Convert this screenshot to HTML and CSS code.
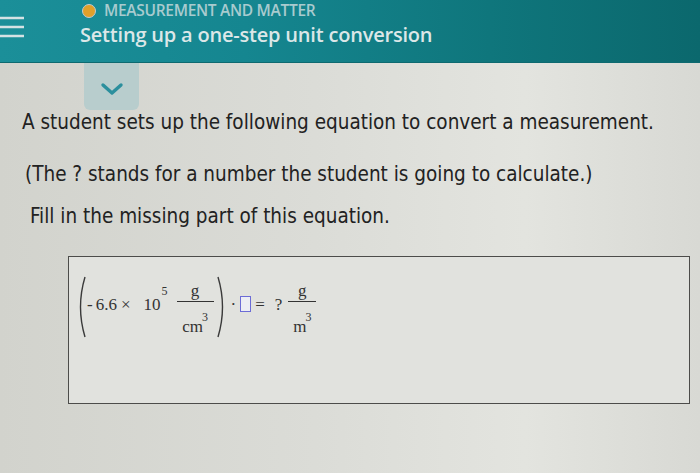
FILE: index.html
```html
<!DOCTYPE html>
<html>
<head>
<meta charset="utf-8">
<link rel="stylesheet" href="styles.css">
</head>
<body>
<header class="topbar">
  <div class="menu">
    <svg width="26" height="26" viewBox="0 0 26 26"><path d="M0 3H24M0 12H24M0 21H24" stroke="#d4e2e4" stroke-width="2.4" fill="none"/></svg>
  </div>
  <div class="titles">
    <div class="topic"><span class="dot"></span>MEASUREMENT AND MATTER</div>
    <div class="title">Setting up a one-step unit conversion</div>
  </div>
</header>
<main class="content">
  <div class="tab-row">
    <div class="tab">
      <svg width="24" height="14" viewBox="0 0 24 14"><path d="M3 3L12 11L21 3" stroke="#2b8f9d" stroke-width="3.4" fill="none" stroke-linecap="round" stroke-linejoin="round"/></svg>
    </div>
  </div>
  <p class="q q1">A student sets up the following equation to convert a measurement.</p>
  <p class="q q2">(The ? stands for a number the student is going to calculate.)</p>
  <p class="q q3">Fill in the missing part of this equation.</p>
  <div class="answer">
    <div class="eq">
      <svg class="paren" width="12" height="62" viewBox="0 0 12 62"><path d="M10 1Q1 31 10 61" stroke="#3a3a3a" stroke-width="1.4" fill="none"/></svg>
      <span class="num"><span class="minus">-</span><span class="d1">6.6</span><span class="times">&times;</span><span class="d2">10</span><span class="sp5">5</span></span>
      <span class="frac f1"><span class="top">g</span><span class="bot"><span class="u">cm</span><span class="sp3">3</span></span></span>
      <svg class="paren close" width="12" height="62" viewBox="0 0 12 62"><path d="M2 1Q11 31 2 61" stroke="#3a3a3a" stroke-width="1.4" fill="none"/></svg>
      <span class="cdot">&middot;</span>
      <span class="slot"></span>
      <span class="eqs">=</span>
      <span class="qm">?</span>
      <span class="frac f2"><span class="top">g</span><span class="bot"><span class="u">m</span><span class="sp3">3</span></span></span>
    </div>
  </div>
</main>
</body>
</html>
```
FILE: styles.css
```css
html, body { margin: 0; padding: 0; }
body {
  width: 700px; height: 473px; overflow: hidden;
  background: linear-gradient(90deg, #d2d3cd 0%, #dbdcd7 45%, #e3e4df 75%, #d8d9d4 100%);
  font-family: "DejaVu Sans", Verdana, sans-serif;
}
.topbar {
  height: 62px;
  background: linear-gradient(90deg, #1b8f99 0%, #158690 35%, #0f767c 70%, #0b686d 100%);
  border-bottom: 1px solid #0e6a70;
  display: flex;
  align-items: flex-start;
}
.menu { width: 26px; padding-top: 15px; }
.titles { margin-left: 54px; }
.topic {
  display: flex; align-items: center;
  font-family: "Open Sans", sans-serif;
  font-weight: 600; font-size: 15.5px;
  color: #a9cbcf;
  height: 19px;
  line-height: 19px;
  padding-top: 1px;
  letter-spacing: -0.3px;
}
.dot {
  width: 12px; height: 12px; border-radius: 50%;
  background: #e1a02a;
  border: 1px solid #c4cacc;
  margin-left: 2px; margin-right: 8px;
}
.title {
  font-family: "Open Sans", sans-serif;
  font-weight: 600; font-size: 20px;
  color: #dce7e8;
  margin-top: 1px;
  letter-spacing: -0.2px;
}
.content { padding-top: 0; }
.tab-row { padding-left: 84px; }
.tab {
  width: 55px; height: 47px;
  background: #b8cdcd;
  border-radius: 0 0 6px 6px;
  display: flex; align-items: center; justify-content: center;
  padding-top: 4px;
  box-sizing: border-box;
}
.q {
  margin: 0;
  font-family: "DejaVu Sans Condensed", "DejaVu Sans", sans-serif;
  font-size: 20.5px;
  line-height: 24px;
  color: #222;
}
.q1 { padding-left: 22px; margin-top: 0; }
.q2 { padding-left: 25px; margin-top: 28px; }
.q3 { padding-left: 30px; margin-top: 18px; }
.answer {
  margin: 28px 10px 0 68px;
  height: 146px;
  border: 1.5px solid #4c4c4a;
  background: #e1e2de;
}
.eq {
  display: flex; align-items: flex-start;
  font-family: "Liberation Serif", serif;
  font-size: 17px;
  line-height: 20px;
  color: #333;
  padding: 17px 0 0 6px;
}
.paren { margin-top: 2px; flex: none; }
.num { display: flex; align-items: flex-start; margin-top: 21px; white-space: nowrap; flex: none; }
.d1 { margin-left: 3px; }
.times { margin-left: 4px; }
.d2 { margin-left: 13px; }
.sp5, .sp3 { font-size: 12px; line-height: 12px; }
.sp5 { margin: -10px 0 0 1px; }
.frac { display: flex; flex-direction: column; align-items: center; margin-top: 8px; flex: none; }
.f1 { width: 37px; margin-left: 9px; }
.f2 { width: 28px; margin-left: 6px; }
.frac .top { align-self: stretch; text-align: center; line-height: 18px; padding-bottom: 1px; border-bottom: 1px solid #333; }
.frac .bot { display: flex; align-items: flex-start; line-height: 18px; padding-top: 16px; white-space: nowrap; }
.frac .bot .sp3 { margin: -7px 0 0 -1px; }
.close { margin-left: 2px; }
.cdot { margin: 21px 0 0 3px; }
.slot { width: 9px; height: 14px; margin: 22px 0 0 4px; border: 1.6px solid #6c6cd6; background: #eceef4; flex: none; }
.eqs { margin: 21px 0 0 4px; }
.qm { margin: 21px 0 0 10px; }
```
